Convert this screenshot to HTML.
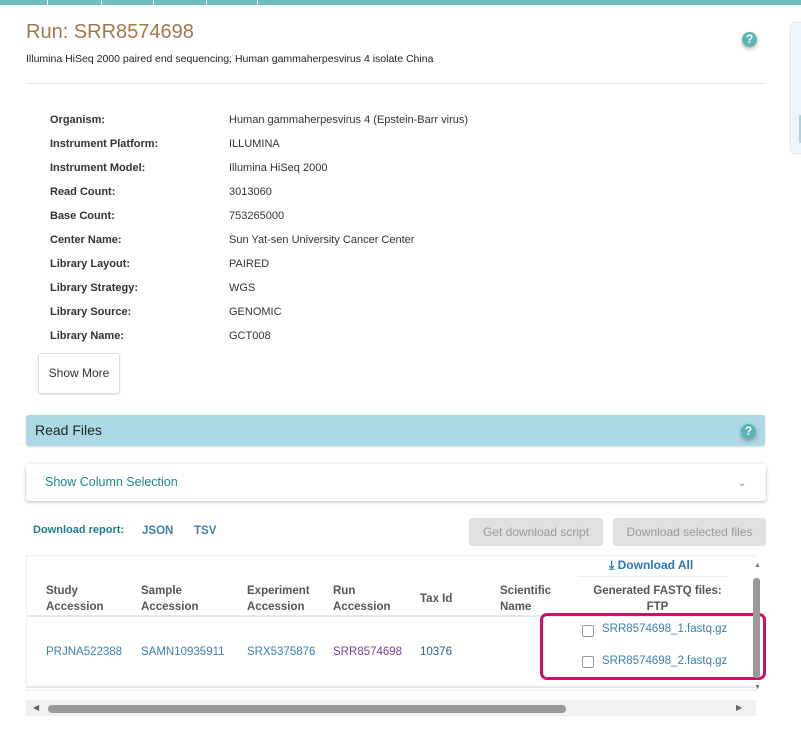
<!DOCTYPE html>
<html><head><style>
body{margin:0;width:801px;height:729px;position:relative;background:#fff;font-family:"Liberation Sans",sans-serif;overflow:hidden}
.abs{position:absolute}
.top{left:0;top:0;width:801px;height:5px;background:#6fbfbf}
.top i{position:absolute;top:0;width:1px;height:5px;background:#fff}
.q{width:15px;height:15px;border-radius:50%;background:#5ab5b5;color:#fff;font-weight:bold;font-size:12px;text-align:center;line-height:15px;box-shadow:0 2px 4px rgba(0,0,0,.3)}
.lbl{left:50px;font-size:11px;font-weight:bold;color:#333}
.val{left:229px;font-size:11px;color:#333}
.cal{font-family:"Liberation Sans",sans-serif}
.link{color:#3a7fb5;font-size:11.5px}
.th{font-size:11.5px;font-weight:bold;color:#555;line-height:16px}
</style></head><body>
<div class="abs top"><i style="left:47px"></i><i style="left:101px"></i><i style="left:153px"></i><i style="left:206px"></i><i style="left:257px"></i></div>
<div class="abs" style="left:26px;top:21px;font-size:20px;color:#a6764a">Run: SRR8574698</div>
<div class="abs" style="left:26px;top:53px;font-size:10.5px;color:#222">Illumina HiSeq 2000 paired end sequencing; Human gammaherpesvirus 4 isolate China</div>
<div class="abs q" style="left:742px;top:32px">?</div>
<div class="abs" style="left:26px;top:83px;width:740px;height:1px;background:#e8e8e8"></div>
<div class="abs" style="left:790px;top:22px;width:20px;height:130px;background:#eef6fc;border:1px solid #dbe6ee;border-radius:4px"></div>
<div class="abs" style="left:799px;top:115px;width:4px;height:28px;background:#aad3dc"></div>

<div class="abs lbl" style="top:114px">Organism:</div><div class="abs val" style="top:114px">Human gammaherpesvirus 4 (Epstein-Barr virus)</div>
<div class="abs lbl" style="top:138px">Instrument Platform:</div><div class="abs val" style="top:138px">ILLUMINA</div>
<div class="abs lbl" style="top:162px">Instrument Model:</div><div class="abs val" style="top:162px">Illumina HiSeq 2000</div>
<div class="abs lbl" style="top:186px">Read Count:</div><div class="abs val" style="top:186px">3013060</div>
<div class="abs lbl" style="top:210px">Base Count:</div><div class="abs val" style="top:210px">753265000</div>
<div class="abs lbl" style="top:234px">Center Name:</div><div class="abs val" style="top:234px">Sun Yat-sen University Cancer Center</div>
<div class="abs lbl" style="top:258px">Library Layout:</div><div class="abs val" style="top:258px">PAIRED</div>
<div class="abs lbl" style="top:282px">Library Strategy:</div><div class="abs val" style="top:282px">WGS</div>
<div class="abs lbl" style="top:306px">Library Source:</div><div class="abs val" style="top:306px">GENOMIC</div>
<div class="abs lbl" style="top:330px">Library Name:</div><div class="abs val" style="top:330px">GCT008</div>
<div class="abs" style="left:38px;top:353px;width:80px;height:39px;border:1px solid #ddd;border-radius:3px;box-shadow:0 1px 2px rgba(0,0,0,.1);font-size:12px;color:#333;line-height:39px;text-align:center">Show More</div>

<div class="abs" style="left:26px;top:415px;width:739px;height:31px;background:#add8e6;border-radius:3px;box-shadow:0 1px 2px rgba(0,0,0,.15)"></div>
<div class="abs" style="left:35px;top:422px;font-size:14px;color:#222">Read Files</div>
<div class="abs q" style="left:741px;top:424px">?</div>

<div class="abs" style="left:26px;top:464px;width:740px;height:37px;background:#fff;border-radius:3px;box-shadow:0 1px 3px rgba(0,0,0,.3)"></div>
<div class="abs" style="left:45px;top:475px;font-size:12.5px;color:#1a8a8a">Show Column Selection</div>
<div class="abs" style="left:738px;top:478px;font-size:10px;color:#888">&#8964;</div>

<div class="abs" style="left:33px;top:524px;font-size:11px;font-weight:bold;color:#1a7f8a">Download report:</div>
<div class="abs link" style="left:142px;top:525px;font-weight:bold">JSON</div>
<div class="abs link" style="left:194px;top:525px;font-weight:bold">TSV</div>
<div class="abs" style="left:469px;top:518px;width:134px;height:28px;background:#e0e0e0;border-radius:3px;color:#999;font-size:12px;line-height:28px;text-align:center">Get download script</div>
<div class="abs" style="left:613px;top:518px;width:153px;height:28px;background:#e0e0e0;border-radius:3px;color:#999;font-size:12px;line-height:28px;text-align:center">Download selected files</div>

<div class="abs" style="left:26px;top:555px;width:730px;height:134px;border:1px solid #eee;border-right:none"></div>
<div class="abs" style="left:609px;top:558px;font-size:12px;font-weight:bold;color:#2a78b8">&#10515; Download All</div>
<div class="abs" style="left:578px;top:576px;width:150px;height:1px;background:#eee"></div>
<div class="abs th" style="left:46px;top:583px">Study<br>Accession</div>
<div class="abs th" style="left:141px;top:583px">Sample<br>Accession</div>
<div class="abs th" style="left:247px;top:583px">Experiment<br>Accession</div>
<div class="abs th" style="left:333px;top:583px">Run<br>Accession</div>
<div class="abs th" style="left:420px;top:591px">Tax Id</div>
<div class="abs th" style="left:500px;top:583px">Scientific<br>Name</div>
<div class="abs th" style="left:585px;top:583px;width:145px;text-align:center">Generated FASTQ files:<br>FTP</div>
<div class="abs" style="left:27px;top:615px;width:728px;height:2px;background:#e8e8e8"></div>
<div class="abs link" style="left:46px;top:646px">PRJNA522388</div>
<div class="abs link" style="left:141px;top:646px">SAMN10935911</div>
<div class="abs link" style="left:247px;top:646px">SRX5375876</div>
<div class="abs link" style="left:333px;top:646px;color:#7a3f9a">SRR8574698</div>
<div class="abs link" style="left:420px;top:646px;color:#2a5aa0">10376</div>
<div class="abs" style="left:582px;top:625px;width:10px;height:10px;border:1px solid #999;border-radius:2px"></div>
<div class="abs link" style="left:602px;top:623px">SRR8574698_1.fastq.gz</div>
<div class="abs" style="left:582px;top:656px;width:10px;height:10px;border:1px solid #999;border-radius:2px"></div>
<div class="abs link" style="left:602px;top:655px">SRR8574698_2.fastq.gz</div>
<div class="abs" style="left:540px;top:613px;width:220px;height:61px;border:3px solid #cc1166;border-radius:7px"></div>
<div class="abs" style="left:27px;top:686px;width:728px;height:2px;background:#e8e8e8"></div>
<div class="abs" style="left:753px;top:578px;width:7px;height:100px;background:#999;border-radius:3px"></div>
<div class="abs" style="left:754px;top:562px;font-size:7px;color:#777">&#9650;</div>
<div class="abs" style="left:754px;top:684px;font-size:7px;color:#777">&#9660;</div>
<div class="abs" style="left:26px;top:700px;width:730px;height:16px;background:#f1f1f1"></div>
<div class="abs" style="left:48px;top:705px;width:518px;height:8px;background:#999;border-radius:4px"></div>
<div class="abs" style="left:33px;top:703px;font-size:8px;color:#666">&#9664;</div>
<div class="abs" style="left:736px;top:703px;font-size:8px;color:#666">&#9654;</div>
</body></html>
